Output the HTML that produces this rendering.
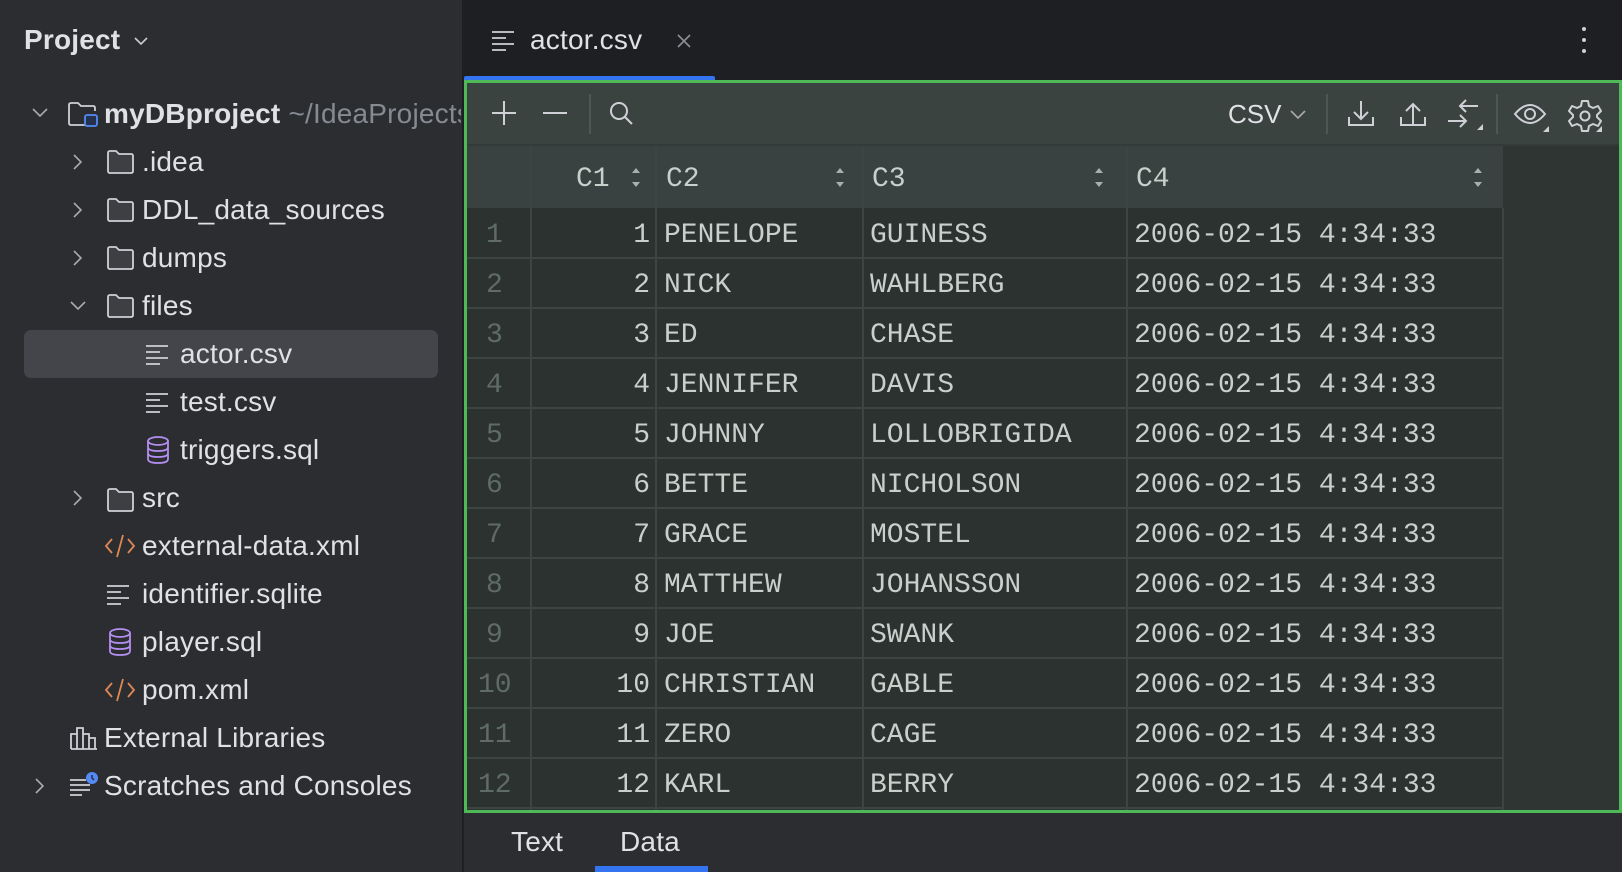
<!DOCTYPE html>
<html><head><meta charset="utf-8"><style>
*{margin:0;padding:0;box-sizing:border-box}
body{width:1622px;height:872px;background:#2b2d30;position:relative;overflow:hidden;font-family:"Liberation Sans",sans-serif;color:#dfe1e5}
.a{position:absolute}
.t{position:absolute;font-size:28px;line-height:48px;height:48px;white-space:nowrap;letter-spacing:0.2px}
.mono{font-family:"Liberation Mono",monospace;font-size:28px;color:#c8d0cc}
svg{position:absolute;overflow:visible}
.cell{position:absolute;height:50px;line-height:50px;white-space:nowrap}
</style></head><body>
<div class="a" style="left:0;top:0;width:462px;height:872px;background:#2b2d30"></div>
<div class="t" style="left:24px;top:16px;font-weight:bold;">Project</div>
<svg style="left:134px;top:36px" width="14" height="10"><path d="M1 2 L7 8 L13 2" fill="none" stroke="#ccc" stroke-width="1.6"/></svg>
<div class="a" style="left:24px;top:330px;width:414px;height:48px;background:#43454a;border-radius:7px"></div>
<svg style="left:32px;top:108px" width="16" height="10"><path d="M1 1 L8 8 L15 1" fill="none" stroke="#aaa" stroke-width="1.6"/></svg>
<svg style="left:73px;top:154px" width="10" height="16"><path d="M1 1 L8 8 L1 15" fill="none" stroke="#aaa" stroke-width="1.6"/></svg>
<svg style="left:73px;top:202px" width="10" height="16"><path d="M1 1 L8 8 L1 15" fill="none" stroke="#aaa" stroke-width="1.6"/></svg>
<svg style="left:73px;top:250px" width="10" height="16"><path d="M1 1 L8 8 L1 15" fill="none" stroke="#aaa" stroke-width="1.6"/></svg>
<svg style="left:70px;top:301px" width="16" height="10"><path d="M1 1 L8 8 L15 1" fill="none" stroke="#aaa" stroke-width="1.6"/></svg>
<svg style="left:73px;top:490px" width="10" height="16"><path d="M1 1 L8 8 L1 15" fill="none" stroke="#aaa" stroke-width="1.6"/></svg>
<svg style="left:35px;top:778px" width="10" height="16"><path d="M1 1 L8 8 L1 15" fill="none" stroke="#aaa" stroke-width="1.6"/></svg>
<svg style="left:68px;top:102px" width="32" height="26"><path d="M1 3 Q1 1 3 1 L10 1 L13 4 L25 4 Q27 4 27 6 L27 9 M1 3 L1 21 Q1 23 3 23 L17 23" fill="none" stroke="#ced0d6" stroke-width="1.8"/><rect x="17" y="13" width="12" height="11" rx="2" fill="#25324d" stroke="#548af7" stroke-width="1.8"/></svg>
<div class="t" style="left:104px;top:90px;font-weight:bold">myDBproject <span style="font-weight:normal;color:#868a91">~/IdeaProjects</span></div>
<div class="a" style="left:461px;top:90px;width:3px;height:48px;background:#2b2d30"></div>
<svg style="left:107px;top:150px" width="28" height="24"><path d="M1 3 Q1 1 3 1 L9 1 L12 4 L24 4 Q26 4 26 6 L26 21 Q26 23 24 23 L3 23 Q1 23 1 21 Z" fill="#3d3f43" stroke="#ced0d6" stroke-width="1.8"/></svg>
<div class="t" style="left:142px;top:138px">.idea</div>
<svg style="left:107px;top:198px" width="28" height="24"><path d="M1 3 Q1 1 3 1 L9 1 L12 4 L24 4 Q26 4 26 6 L26 21 Q26 23 24 23 L3 23 Q1 23 1 21 Z" fill="#3d3f43" stroke="#ced0d6" stroke-width="1.8"/></svg>
<div class="t" style="left:142px;top:186px">DDL_data_sources</div>
<svg style="left:107px;top:246px" width="28" height="24"><path d="M1 3 Q1 1 3 1 L9 1 L12 4 L24 4 Q26 4 26 6 L26 21 Q26 23 24 23 L3 23 Q1 23 1 21 Z" fill="#3d3f43" stroke="#ced0d6" stroke-width="1.8"/></svg>
<div class="t" style="left:142px;top:234px">dumps</div>
<svg style="left:107px;top:294px" width="28" height="24"><path d="M1 3 Q1 1 3 1 L9 1 L12 4 L24 4 Q26 4 26 6 L26 21 Q26 23 24 23 L3 23 Q1 23 1 21 Z" fill="#3d3f43" stroke="#ced0d6" stroke-width="1.8"/></svg>
<div class="t" style="left:142px;top:282px">files</div>
<svg style="left:146px;top:344px" width="24" height="20"><path d="M0 2H22M0 8H14M0 14H22M0 20H14" stroke="#ced0d6" stroke-width="1.8"/></svg>
<div class="t" style="left:180px;top:330px">actor.csv</div>
<svg style="left:146px;top:392px" width="24" height="20"><path d="M0 2H22M0 8H14M0 14H22M0 20H14" stroke="#ced0d6" stroke-width="1.8"/></svg>
<div class="t" style="left:180px;top:378px">test.csv</div>
<svg style="left:146px;top:436px" width="24" height="28"><ellipse cx="12" cy="5" rx="10" ry="4" fill="none" stroke="#b48ef0" stroke-width="1.8"/><path d="M2 5V23Q2 27 12 27Q22 27 22 23V5M2 11Q2 15 12 15Q22 15 22 11M2 17Q2 21 12 21Q22 21 22 17" fill="none" stroke="#b48ef0" stroke-width="1.8"/></svg>
<div class="t" style="left:180px;top:426px">triggers.sql</div>
<svg style="left:107px;top:488px" width="28" height="24"><path d="M1 3 Q1 1 3 1 L9 1 L12 4 L24 4 Q26 4 26 6 L26 21 Q26 23 24 23 L3 23 Q1 23 1 21 Z" fill="#3d3f43" stroke="#ced0d6" stroke-width="1.8"/></svg>
<div class="t" style="left:142px;top:474px">src</div>
<svg style="left:104px;top:533px" width="32" height="26"><path d="M8 6L2 13L8 20M24 6L30 13L24 20M19 2L13 24" fill="none" stroke="#e08855" stroke-width="1.8"/></svg>
<div class="t" style="left:142px;top:522px">external-data.xml</div>
<svg style="left:107px;top:584px" width="24" height="20"><path d="M0 2H22M0 8H14M0 14H22M0 20H14" stroke="#ced0d6" stroke-width="1.8"/></svg>
<div class="t" style="left:142px;top:570px">identifier.sqlite</div>
<svg style="left:108px;top:628px" width="24" height="28"><ellipse cx="12" cy="5" rx="10" ry="4" fill="none" stroke="#b48ef0" stroke-width="1.8"/><path d="M2 5V23Q2 27 12 27Q22 27 22 23V5M2 11Q2 15 12 15Q22 15 22 11M2 17Q2 21 12 21Q22 21 22 17" fill="none" stroke="#b48ef0" stroke-width="1.8"/></svg>
<div class="t" style="left:142px;top:618px">player.sql</div>
<svg style="left:104px;top:677px" width="32" height="26"><path d="M8 6L2 13L8 20M24 6L30 13L24 20M19 2L13 24" fill="none" stroke="#e08855" stroke-width="1.8"/></svg>
<div class="t" style="left:142px;top:666px">pom.xml</div>
<svg style="left:70px;top:726px" width="28" height="24"><path d="M1 23V8H7V23M7 23V2H13V23M13 23V8H19V23M1 23H27M19 12H25V23" fill="none" stroke="#ced0d6" stroke-width="1.8"/></svg>
<div class="t" style="left:104px;top:714px">External Libraries</div>
<svg style="left:70px;top:772px" width="30" height="26"><path d="M0 8H16M0 13H20M0 18H20M0 23H12" stroke="#ced0d6" stroke-width="1.8"/><circle cx="22" cy="6" r="6" fill="#548af7"/><path d="M22 3V6L24 8" stroke="#2b2d30" stroke-width="1.5" fill="none"/></svg>
<div class="t" style="left:104px;top:762px">Scratches and Consoles</div>

<div class="a" style="left:462px;top:0;width:1160px;height:81px;background:#1e1f22"></div>
<div class="a" style="left:462px;top:0;width:2px;height:872px;background:#1e1f22"></div>
<svg style="left:492px;top:30px" width="24" height="20"><path d="M0 2H22M0 8H14M0 14H22M0 20H14" stroke="#ced0d6" stroke-width="1.8"/></svg>
<div class="t" style="left:530px;top:16px">actor.csv</div>
<svg style="left:677px;top:34px" width="14" height="14"><path d="M1 1L13 13M13 1L1 13" stroke="#8c8f94" stroke-width="1.6"/></svg>
<div class="a" style="left:1582px;top:27px;width:4px;height:4px;border-radius:2px;background:#ced0d6;box-shadow:0 11px 0 #ced0d6,0 22px 0 #ced0d6"></div>
<div class="a" style="left:464px;top:76px;width:251px;height:5px;background:#3574f0;border-radius:2px 2px 0 0"></div>

<div class="a" style="left:464px;top:80px;width:1158px;height:733px;background:#2e3532;border:3px solid #4fb857"></div>
<div class="a" style="left:467px;top:83px;width:1152px;height:61px;background:#3a4340"></div>
<div class="a" style="left:467px;top:144px;width:1152px;height:2px;background:#333b38"></div>
<svg style="left:492px;top:101px" width="24" height="24"><path d="M12 0V24M0 12H24" stroke="#ced0d6" stroke-width="2"/></svg>
<svg style="left:543px;top:101px" width="24" height="24"><path d="M0 12H24" stroke="#ced0d6" stroke-width="2"/></svg>
<div class="a" style="left:589px;top:94px;width:2px;height:40px;background:#4e5754"></div>
<svg style="left:610px;top:102px" width="24" height="24"><circle cx="9" cy="9" r="8" fill="none" stroke="#ced0d6" stroke-width="2"/><path d="M15 15L22 22" stroke="#ced0d6" stroke-width="2"/></svg>
<div class="a" style="left:1228px;top:94px;font-size:26px;line-height:40px;color:#dfe1e5">CSV</div>
<svg style="left:1290px;top:110px" width="16" height="9"><path d="M1 1L8 8L15 1" fill="none" stroke="#aaa" stroke-width="1.6"/></svg>
<div class="a" style="left:1326px;top:94px;width:2px;height:40px;background:#4e5754"></div>
<svg style="left:1348px;top:101px" width="26" height="26"><path d="M13 0V18M6 11L13 18L20 11M1 16V24H25V16" fill="none" stroke="#ced0d6" stroke-width="2"/></svg>
<svg style="left:1400px;top:101px" width="26" height="26"><path d="M13 24V3M6 10L13 3L20 10M1 16V24H25V16" fill="none" stroke="#ced0d6" stroke-width="2"/></svg>
<svg style="left:1448px;top:100px" width="36" height="30"><path d="M12 6H30M18 0L12 6L18 12M0 21H18M12 15L18 21L12 27" fill="none" stroke="#ced0d6" stroke-width="2"/><path d="M35 24V30H29Z" fill="#ced0d6"/></svg>
<div class="a" style="left:1496px;top:94px;width:2px;height:40px;background:#4e5754"></div>
<svg style="left:1514px;top:102px" width="36" height="30"><path d="M1 12Q16 -6 31 12Q16 30 1 12Z" fill="none" stroke="#ced0d6" stroke-width="2"/><circle cx="16" cy="12" r="5" fill="none" stroke="#ced0d6" stroke-width="2"/><path d="M35 24V30H29Z" fill="#ced0d6"/></svg>
<svg style="left:1569px;top:100px" width="34" height="32"><path d="M13 1H19L20 6L24 8L29 6L32 11L28 15V17L32 21L29 26L24 24L20 26L19 31H13L12 26L8 24L3 26L0 21L4 17V15L0 11L3 6L8 8L12 6Z" fill="none" stroke="#ced0d6" stroke-width="2" stroke-linejoin="round"/><circle cx="16" cy="16" r="4.5" fill="none" stroke="#ced0d6" stroke-width="2"/><path d="M33 26V32H27Z" fill="#ced0d6"/></svg>

<div class="a" style="left:467px;top:146px;width:1036px;height:62px;background:#394240"></div>
<div class="a" style="left:467px;top:208px;width:1036px;height:602px;background:#2b3230"></div>
<svg style="left:0;top:0" width="1622" height="872">
<g stroke="#3c4542" stroke-width="2">
<path d="M531 146V810M656 146V810M863 146V810M1127 146V810M1503 208V810"/>
<path d="M467 258H1503M467 308H1503M467 358H1503M467 408H1503M467 458H1503M467 508H1503M467 558H1503M467 608H1503M467 658H1503M467 708H1503M467 758H1503M467 808H1503"/>
</g>
<g fill="#a7b0ac">
<path d="M632 173l4 -5 4 5zM632 182l4 5 4 -5z"/>
<path d="M836 173l4 -5 4 5zM836 182l4 5 4 -5z"/>
<path d="M1095 173l4 -5 4 5zM1095 182l4 5 4 -5z"/>
<path d="M1474 173l4 -5 4 5zM1474 182l4 5 4 -5z"/>
</g>
</svg>
<div class="cell mono" style="left:576px;top:155px">C1</div>
<div class="cell mono" style="left:666px;top:155px">C2</div>
<div class="cell mono" style="left:872px;top:155px">C3</div>
<div class="cell mono" style="left:1136px;top:155px">C4</div>

<div style="position:absolute;left:0;top:211px">
<div class="cell mono" style="top:0;left:486px;color:#5f6b66">1</div><div class="cell mono" style="top:0;left:600px;width:50px;text-align:right">1</div><div class="cell mono" style="top:0;left:664px">PENELOPE</div><div class="cell mono" style="top:0;left:870px">GUINESS</div><div class="cell mono" style="top:0;left:1134px">2006-02-15 4:34:33</div>
<div class="cell mono" style="top:50px;left:486px;color:#5f6b66">2</div><div class="cell mono" style="top:50px;left:600px;width:50px;text-align:right">2</div><div class="cell mono" style="top:50px;left:664px">NICK</div><div class="cell mono" style="top:50px;left:870px">WAHLBERG</div><div class="cell mono" style="top:50px;left:1134px">2006-02-15 4:34:33</div>
<div class="cell mono" style="top:100px;left:486px;color:#5f6b66">3</div><div class="cell mono" style="top:100px;left:600px;width:50px;text-align:right">3</div><div class="cell mono" style="top:100px;left:664px">ED</div><div class="cell mono" style="top:100px;left:870px">CHASE</div><div class="cell mono" style="top:100px;left:1134px">2006-02-15 4:34:33</div>
<div class="cell mono" style="top:150px;left:486px;color:#5f6b66">4</div><div class="cell mono" style="top:150px;left:600px;width:50px;text-align:right">4</div><div class="cell mono" style="top:150px;left:664px">JENNIFER</div><div class="cell mono" style="top:150px;left:870px">DAVIS</div><div class="cell mono" style="top:150px;left:1134px">2006-02-15 4:34:33</div>
<div class="cell mono" style="top:200px;left:486px;color:#5f6b66">5</div><div class="cell mono" style="top:200px;left:600px;width:50px;text-align:right">5</div><div class="cell mono" style="top:200px;left:664px">JOHNNY</div><div class="cell mono" style="top:200px;left:870px">LOLLOBRIGIDA</div><div class="cell mono" style="top:200px;left:1134px">2006-02-15 4:34:33</div>
<div class="cell mono" style="top:250px;left:486px;color:#5f6b66">6</div><div class="cell mono" style="top:250px;left:600px;width:50px;text-align:right">6</div><div class="cell mono" style="top:250px;left:664px">BETTE</div><div class="cell mono" style="top:250px;left:870px">NICHOLSON</div><div class="cell mono" style="top:250px;left:1134px">2006-02-15 4:34:33</div>
<div class="cell mono" style="top:300px;left:486px;color:#5f6b66">7</div><div class="cell mono" style="top:300px;left:600px;width:50px;text-align:right">7</div><div class="cell mono" style="top:300px;left:664px">GRACE</div><div class="cell mono" style="top:300px;left:870px">MOSTEL</div><div class="cell mono" style="top:300px;left:1134px">2006-02-15 4:34:33</div>
<div class="cell mono" style="top:350px;left:486px;color:#5f6b66">8</div><div class="cell mono" style="top:350px;left:600px;width:50px;text-align:right">8</div><div class="cell mono" style="top:350px;left:664px">MATTHEW</div><div class="cell mono" style="top:350px;left:870px">JOHANSSON</div><div class="cell mono" style="top:350px;left:1134px">2006-02-15 4:34:33</div>
<div class="cell mono" style="top:400px;left:486px;color:#5f6b66">9</div><div class="cell mono" style="top:400px;left:600px;width:50px;text-align:right">9</div><div class="cell mono" style="top:400px;left:664px">JOE</div><div class="cell mono" style="top:400px;left:870px">SWANK</div><div class="cell mono" style="top:400px;left:1134px">2006-02-15 4:34:33</div>
<div class="cell mono" style="top:450px;left:478px;color:#5f6b66">10</div><div class="cell mono" style="top:450px;left:600px;width:50px;text-align:right">10</div><div class="cell mono" style="top:450px;left:664px">CHRISTIAN</div><div class="cell mono" style="top:450px;left:870px">GABLE</div><div class="cell mono" style="top:450px;left:1134px">2006-02-15 4:34:33</div>
<div class="cell mono" style="top:500px;left:478px;color:#5f6b66">11</div><div class="cell mono" style="top:500px;left:600px;width:50px;text-align:right">11</div><div class="cell mono" style="top:500px;left:664px">ZERO</div><div class="cell mono" style="top:500px;left:870px">CAGE</div><div class="cell mono" style="top:500px;left:1134px">2006-02-15 4:34:33</div>
<div class="cell mono" style="top:550px;left:478px;color:#5f6b66">12</div><div class="cell mono" style="top:550px;left:600px;width:50px;text-align:right">12</div><div class="cell mono" style="top:550px;left:664px">KARL</div><div class="cell mono" style="top:550px;left:870px">BERRY</div><div class="cell mono" style="top:550px;left:1134px">2006-02-15 4:34:33</div>
</div>

<div class="a" style="left:464px;top:813px;width:1158px;height:59px;background:#2b2d30"></div>
<div class="t" style="left:511px;top:818px">Text</div>
<div class="t" style="left:620px;top:818px">Data</div>
<div class="a" style="left:595px;top:866px;width:113px;height:6px;background:#3574f0"></div>
</body></html>
